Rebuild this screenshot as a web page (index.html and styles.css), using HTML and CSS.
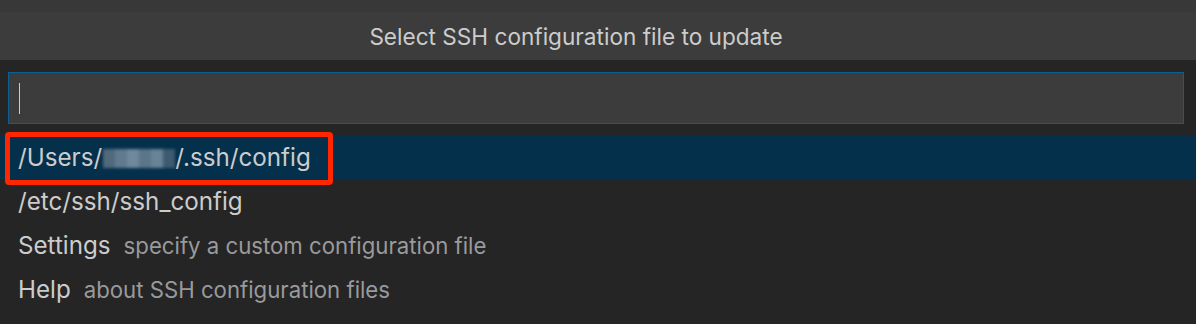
FILE: index.html
```html
<!DOCTYPE html>
<html>
<head>
<meta charset="utf-8">
<link rel="stylesheet" href="styles.css">
</head>
<body>
<div class="picker">
  <div class="topband"></div>
  <div class="title">Select SSH configuration file to update</div>
  <div class="inputwrap">
    <div class="input"><span class="caret"></span></div>
  </div>
  <div class="list">
    <div class="row selected">
      <span class="label">/Users/<span class="blur"><i class="b1"></i><i class="b2"></i><i class="b3"></i><i class="b4"></i><i class="b5"></i><i class="b6"></i></span>/.ssh/config</span>
      <span class="highlight"></span>
    </div>
    <div class="row"><span class="label">/etc/ssh/ssh_config</span></div>
    <div class="row"><span class="label">Settings</span><span class="desc">specify a custom configuration file</span></div>
    <div class="row"><span class="label">Help</span><span class="desc">about SSH configuration files</span></div>
  </div>
</div>
</body>
</html>
```

FILE: styles.css
```css
* { box-sizing: border-box; }
html, body { margin: 0; padding: 0; }
body {
  width: 1196px;
  height: 324px;
  overflow: hidden;
  background: #252526;
  font-family: Inter, "Liberation Sans", sans-serif;
}
.picker { display: flex; flex-direction: column; }
.topband { height: 12px; background: #383838; }
.title {
  height: 48px;
  background: #3c3c3c;
  color: #cccccc;
  font-size: 22.6px;
  display: flex;
  align-items: center;
  justify-content: center;
  padding-right: 44px;
}
.inputwrap { padding: 12px 12px 0 8px; }
.input {
  height: 52px;
  background: #3c3c3c;
  border: 1px solid #0e5f8f;
  display: flex;
  align-items: center;
  padding-left: 10px;
}
.caret { width: 1px; height: 31px; background: #cccccc; }
.list { padding-top: 11px; }
.row {
  position: relative;
  height: 44px;
  display: flex;
  align-items: center;
  padding-left: 18px;
  font-size: 24.2px;
  color: #cccccc;
}
.row.selected { background: #04304c; }
.desc { color: #9a9a9a; margin-left: 13px; font-size: 22.2px; }
.blur {
  display: inline-flex;
  width: 72px;
  height: 19px;
  margin-left: 1px;
  vertical-align: -2px;
  filter: blur(1.5px);
}
.blur i { flex: 1; height: 100%; }
.b1 { background: #52697c; }
.b2 { background: #607a8f; }
.b3 { background: #6f889b; }
.b4 { background: #5c7689; }
.b5 { background: #688296; }
.b6 { background: #3e5a70; }
.highlight {
  position: absolute;
  left: 5px;
  top: -3px;
  width: 328px;
  height: 53px;
  border: 5px solid #ff2600;
  border-radius: 4px;
}
```
